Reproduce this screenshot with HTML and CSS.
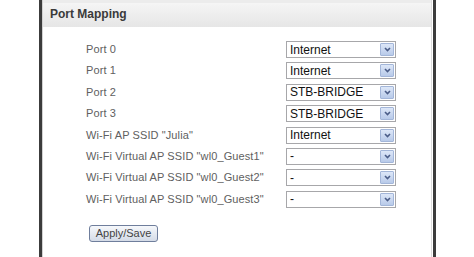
FILE: index.html
```html
<!DOCTYPE html>
<html lang="en">
<head>
    <meta charset="UTF-8">
    <title>Port Mapping</title>
    <link rel="stylesheet" href="styles.css">
</head>

<body>
<div class="frame">
    <div class="panel">
        <div class="head">Port Mapping</div>
        <div class="body">
            <div class="grid">
                <span class="label">Port 0</span>
                <div class="sel"><span class="val">Internet</span><span class="arrow"><svg width="7" height="5" viewBox="0 0 7 5"><polyline points="1,1 3.5,3.5 6,1" fill="none" stroke="#4b5d88" stroke-width="1.6"/></svg></span></div>

                <span class="label">Port 1</span>
                <div class="sel"><span class="val">Internet</span><span class="arrow"><svg width="7" height="5" viewBox="0 0 7 5"><polyline points="1,1 3.5,3.5 6,1" fill="none" stroke="#4b5d88" stroke-width="1.6"/></svg></span></div>

                <span class="label">Port 2</span>
                <div class="sel"><span class="val">STB-BRIDGE</span><span class="arrow"><svg width="7" height="5" viewBox="0 0 7 5"><polyline points="1,1 3.5,3.5 6,1" fill="none" stroke="#4b5d88" stroke-width="1.6"/></svg></span></div>

                <span class="label">Port 3</span>
                <div class="sel"><span class="val">STB-BRIDGE</span><span class="arrow"><svg width="7" height="5" viewBox="0 0 7 5"><polyline points="1,1 3.5,3.5 6,1" fill="none" stroke="#4b5d88" stroke-width="1.6"/></svg></span></div>

                <span class="label">Wi-Fi AP SSID "Julia"</span>
                <div class="sel"><span class="val">Internet</span><span class="arrow"><svg width="7" height="5" viewBox="0 0 7 5"><polyline points="1,1 3.5,3.5 6,1" fill="none" stroke="#4b5d88" stroke-width="1.6"/></svg></span></div>

                <span class="label">Wi-Fi Virtual AP SSID "wl0_Guest1"</span>
                <div class="sel"><span class="val">-</span><span class="arrow"><svg width="7" height="5" viewBox="0 0 7 5"><polyline points="1,1 3.5,3.5 6,1" fill="none" stroke="#4b5d88" stroke-width="1.6"/></svg></span></div>

                <span class="label">Wi-Fi Virtual AP SSID "wl0_Guest2"</span>
                <div class="sel"><span class="val">-</span><span class="arrow"><svg width="7" height="5" viewBox="0 0 7 5"><polyline points="1,1 3.5,3.5 6,1" fill="none" stroke="#4b5d88" stroke-width="1.6"/></svg></span></div>

                <span class="label">Wi-Fi Virtual AP SSID "wl0_Guest3"</span>
                <div class="sel"><span class="val">-</span><span class="arrow"><svg width="7" height="5" viewBox="0 0 7 5"><polyline points="1,1 3.5,3.5 6,1" fill="none" stroke="#4b5d88" stroke-width="1.6"/></svg></span></div>
            </div>
            <button class="btn">Apply/Save</button>
        </div>
    </div>
</div>
</body>
</html>
```

FILE: styles.css
```css
* {
    margin: 0;
    padding: 0;
    box-sizing: border-box;
}

body {
    background-color: #fff;
    font-family: "Liberation Sans", Arial, sans-serif;
}

.frame {
    margin-left: 39px;
    width: 397px;
    height: 257px;
    border-left: 3px solid #3c3c3c;
    border-right: 3px solid #3c3c3c;
}

.panel {
    height: 100%;
    margin-right: 1px;
    border-left: 1px solid #d2d2d2;
    border-right: 1px solid #dcdcdc;
}

.head {
    height: 27px;
    border-top: 3px solid #ececec;
    padding-left: 7px;
    line-height: 23px;
    font-size: 12px;
    font-weight: bold;
    color: #3a3a3a;
    background: linear-gradient(#f5f5f5, #e6e6e6);
}

.body {
    padding: 14px 0 0 43px;
}

.grid {
    display: grid;
    grid-template-columns: 200px 110px;
    grid-auto-rows: 17px;
    row-gap: 4.4px;
}

.label {
    line-height: 17px;
    font-size: 11px;
    letter-spacing: 0.1px;
    color: #606060;
}

.sel {
    display: flex;
    align-items: center;
    height: 17px;
    border: 1px solid #a7a7aa;
    padding-left: 3px;
    font-size: 12px;
    color: #111;
}

.arrow {
    display: flex;
    align-items: center;
    justify-content: center;
    margin-left: auto;
    margin-right: 1px;
    width: 14px;
    height: 13px;
    border: 1px solid #a3b6d9;
    border-radius: 1px;
    background: linear-gradient(#dde7f8, #b8cae9);
}

.btn {
    margin: 17px 0 0 3px;
    width: 69px;
    height: 17px;
    border: 1px solid #6f7e9c;
    border-radius: 3px;
    font: normal 11px "Liberation Sans", Arial, sans-serif;
    color: #444;
    background: linear-gradient(#f6f8fb, #d4dbe7);
}
```
